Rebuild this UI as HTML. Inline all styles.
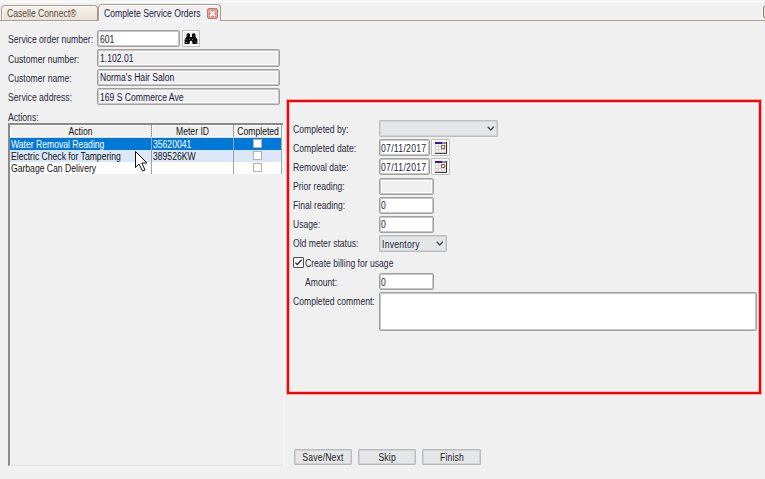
<!DOCTYPE html>
<html><head><meta charset="utf-8">
<style>
*{box-sizing:border-box;margin:0;padding:0}
html,body{width:765px;height:479px;overflow:hidden;background:#f0f0f0;font-family:"Liberation Sans",sans-serif;font-size:10px;color:#222;position:relative}
.a{position:absolute;white-space:nowrap}
.lbl{position:absolute;white-space:nowrap;line-height:13px;color:#2a2a3a;transform:scaleX(.86);transform-origin:0 10px}
.ctr{transform-origin:50% 10px}
.inp{position:absolute;background:#fff;border:1px solid #a0a0a0;border-radius:2px;box-shadow:inset 0 0 0 1px #c6c6c6}
.ro{background:#f0f0f0;box-shadow:inset 0 0 0 1px #c6c6c6,inset 0 0 0 2px #fbfbfb}
.txt{position:absolute;white-space:nowrap;line-height:13px;color:#1a1a3a;transform:scaleX(.86);transform-origin:0 10px}
.bs{display:inline-block;transform:scaleX(.86);letter-spacing:.2px}
.btn{position:absolute;background:#e5e6e7;border:1px solid #bababa;border-radius:1px;box-shadow:inset 0 0 0 1px #d2d2d2;text-align:center;line-height:16px;color:#222}
</style></head><body>
<!-- top tab bar -->
<div class="a" style="left:0;top:0;width:765px;height:1px;background:#f2f6f2"></div>
<div class="a" style="left:0;top:1px;width:765px;height:1px;background:#fdfdfd"></div>
<div class="a" style="left:0;top:2px;width:765px;height:1px;background:#f6f6f6"></div>
<div class="a" style="left:0;top:20px;width:765px;height:1px;background:#a99b90"></div>
<div class="a" style="left:0;top:21px;width:765px;height:1px;background:#f6f6f6"></div>
<div class="a" style="left:0;top:19px;width:765px;height:1px;background:#f4f4f4"></div>
<!-- inactive tab -->
<div class="a" style="left:1px;top:5px;width:97px;height:15px;border:1px solid #a99b90;border-bottom:none;border-radius:4px 4px 0 0;background:linear-gradient(#f6f1e8,#e9e2d6);box-shadow:inset 1px 1px 0 #fff"></div>
<div class="lbl" style="left:7px;top:7px;color:#5a4a40">Caselle Connect®</div>
<!-- active tab -->
<div class="a" style="left:98px;top:4px;width:123px;height:17px;border:1px solid #a99b90;border-bottom:none;border-radius:4px 4px 0 0;background:#f0f0f0;box-shadow:inset 1px 1px 0 #fff"></div>
<div class="lbl" style="left:104px;top:7px;color:#1c1c40">Complete Service Orders</div>
<div class="a" style="left:207px;top:8px;width:11px;height:11px;border:1px solid #a08478;border-radius:2px;background:#f07c7c;box-shadow:inset 0 0 0 1px #f4a0a0"></div>
<svg class="a" style="left:207px;top:8px" width="11" height="11"><path d="M3 3L8 8M8 3L3 8" stroke="#fff" stroke-width="1.8"/></svg>

<div class="a" style="left:763px;top:5px;width:10px;height:14px;border:1px solid #8e8078;border-radius:3px;background:#ece6dc"></div>
<div class="a" style="left:762px;top:6px;width:1px;height:12px;background-image:linear-gradient(#fff 50%,#f0f0f0 50%);background-size:1px 2px"></div>
<!-- left form -->
<div class="lbl" style="left:8px;top:33px">Service order number:</div>
<div class="inp" style="left:97px;top:30px;width:83px;height:17px"></div>
<div class="txt" style="left:100px;top:33px">601</div>
<div class="a" style="left:182px;top:30px;width:18px;height:17px;border:1px solid #bdbdbd;background:#f0f0f0;box-shadow:inset 1px 1px 0 #fff,inset -1px -1px 0 #fff"></div>
<svg class="a" style="left:184px;top:33px" width="14" height="11" viewBox="0 0 14 11"><path d="M2.6 1Q4.3 -0.6 6 1V4H8V1Q9.7 -0.6 11.4 1V3.5L13.4 6.5V11H8.6Q8.4 8 7 7.6Q5.6 8 5.4 11H0.6V6.5L2.6 3.5Z" fill="#0a0a0a"/><rect x="1.5" y="6" width="1" height="1" fill="#9a9a9a"/><rect x="5" y="6" width="1" height="1" fill="#777"/><rect x="8" y="6" width="1" height="1" fill="#777"/><rect x="2" y="9" width="1" height="1" fill="#888"/><rect x="11.5" y="9" width="1" height="1" fill="#888"/></svg>

<div class="lbl" style="left:8px;top:53px">Customer number:</div>
<div class="inp ro" style="left:97px;top:49px;width:183px;height:18px"></div>
<div class="txt" style="left:100px;top:52px">1.102.01</div>

<div class="lbl" style="left:8px;top:72px">Customer name:</div>
<div class="inp ro" style="left:97px;top:69px;width:183px;height:17px"></div>
<div class="txt" style="left:100px;top:71px">Norma's Hair Salon</div>

<div class="lbl" style="left:8px;top:91px">Service address:</div>
<div class="inp ro" style="left:97px;top:88px;width:183px;height:17px"></div>
<div class="txt" style="left:100px;top:91px">169 S Commerce Ave</div>

<div class="lbl" style="left:8px;top:111px">Actions:</div>

<!-- table -->
<div class="a" style="left:8px;top:123px;width:275px;height:343px;border-left:2px solid #8a8a8a;border-top:2px solid #8a8a8a;border-bottom:1px solid #e2e4e6"></div>
<div class="a" style="left:10px;top:125px;width:272px;height:13px;background:#f0f0f0;border-top:1px solid #fff;border-left:1px solid #fff"></div>
<div class="a" style="left:10px;top:136px;width:272px;height:1px;background-image:linear-gradient(90deg,#fff 50%,#f3efe9 50%);background-size:2px 1px"></div>
<div class="a" style="left:10px;top:137px;width:272px;height:1px;background:#e2d9d3"></div>
<div class="a" style="left:10px;top:138px;width:272px;height:12px;background:#0078d7"></div>
<div class="a" style="left:10px;top:150px;width:272px;height:12px;background:#dbe7f7"></div>
<div class="a" style="left:10px;top:162px;width:272px;height:12px;background:#ffffff"></div>
<div class="a" style="left:151px;top:125px;width:1px;height:12px;background-image:linear-gradient(#8a8a8a 50%,#b0b0b0 50%);background-size:1px 2px"></div>
<div class="a" style="left:152px;top:125px;width:1px;height:12px;background:#fafafa"></div>
<div class="a" style="left:151px;top:138px;width:1px;height:36px;background:#a0a0a0"></div>
<div class="a" style="left:233px;top:125px;width:1px;height:12px;background-image:linear-gradient(#8a8a8a 50%,#b0b0b0 50%);background-size:1px 2px"></div>
<div class="a" style="left:234px;top:125px;width:1px;height:12px;background:#fafafa"></div>
<div class="a" style="left:233px;top:138px;width:1px;height:36px;background:#a0a0a0"></div>
<div class="a" style="left:281px;top:125px;width:1px;height:49px;background:#a8a8a8"></div>
<div class="a" style="left:283px;top:125px;width:1px;height:341px;border-left:1px dotted #fff"></div>
<div class="lbl ctr" style="left:10px;top:125px;width:141px;text-align:center;color:#111">Action</div>
<div class="lbl ctr" style="left:152px;top:125px;width:81px;text-align:center;color:#111">Meter ID</div>
<div class="lbl ctr" style="left:234px;top:125px;width:47px;text-align:center;color:#111">Completed</div>
<div class="lbl" style="left:11px;top:138px;color:#fff">Water Removal Reading</div>
<div class="lbl" style="left:153px;top:138px;color:#fff">35620041</div>
<div class="lbl" style="left:11px;top:150px;color:#111">Electric Check for Tampering</div>
<div class="lbl" style="left:153px;top:150px;color:#111">389526KW</div>
<div class="lbl" style="left:11px;top:162px;color:#111">Garbage Can Delivery</div>
<div class="a" style="left:253px;top:139px;width:9px;height:9px;border:1px solid #b0b0b0;background:#fff"></div>
<div class="a" style="left:253px;top:151px;width:9px;height:9px;border:1px solid #b0b0b0;background:#fff"></div>
<div class="a" style="left:253px;top:163px;width:9px;height:9px;border:1px solid #b0b0b0;background:#fff"></div>
<!-- cursor -->
<svg class="a" style="left:128px;top:146px" width="26" height="30" viewBox="0 0 26 30"><path d="M7.5 5.5L7.5 21.5L11 18L14.5 25L17 24L13.8 17L19 17Z" fill="#fff" stroke="#111" stroke-width="1" stroke-linejoin="miter"/></svg>

<!-- red box -->
<div class="a" style="left:287px;top:100px;width:474px;height:294px;border:2px solid #ff0000;box-shadow:0 0 0 1px rgba(255,40,40,.4),0 0 0 2px rgba(236,250,250,.9),inset 0 0 0 1px rgba(255,40,40,.3),inset 0 0 0 2px rgba(236,250,250,.9)"></div>

<!-- right form -->
<div class="lbl" style="left:293px;top:123px">Completed by:</div>
<div class="a" style="left:379px;top:120px;width:119px;height:17px;border:1px solid #bdbdbd;border-radius:1px;background:#e3e5e6;box-shadow:inset 0 0 0 1px #d0d2d3"></div>
<svg class="a" style="left:487px;top:126px" width="8" height="6"><path d="M0.7 0.8L3.8 4L6.9 0.8" fill="none" stroke="#4a4a4a" stroke-width="1.3"/></svg>

<div class="lbl" style="left:293px;top:142px">Completed date:</div>
<div class="inp" style="left:379px;top:139px;width:51px;height:17px"></div>
<div class="txt" style="left:381px;top:142px;letter-spacing:.35px">07/11/2017</div>
<div class="a" style="left:431px;top:139px;width:19px;height:17px;border:1px solid #bcbcbc;border-radius:1px;background:#f0f0f0;box-shadow:inset 0 0 0 1px #fff"></div>
<svg class="a" style="left:435px;top:142px" width="12" height="12" viewBox="0 0 12 12"><rect width="12" height="12" fill="#fff"/><path d="M0.5 2v9M3.5 2v9M6.5 2v9M9.5 2v9M0 4.5h11M0 7.5h11M0 10.5h11" stroke="#cfcfcf" stroke-width="1"/><rect x="0" y="0" width="7" height="2" fill="#3a149e"/><rect x="7" y="0" width="4" height="2" fill="#8c8c8c"/><rect x="11" y="0" width="1" height="12" fill="#333"/><rect x="0" y="11" width="12" height="1" fill="#444"/><rect x="6.5" y="3.5" width="3" height="3" fill="#f4e8e0" stroke="#b85432" stroke-width="1"/></svg>

<div class="lbl" style="left:293px;top:161px">Removal date:</div>
<div class="inp" style="left:379px;top:158px;width:51px;height:17px"></div>
<div class="txt" style="left:381px;top:161px;letter-spacing:.35px">07/11/2017</div>
<div class="a" style="left:431px;top:158px;width:19px;height:17px;border:1px solid #bcbcbc;border-radius:1px;background:#f0f0f0;box-shadow:inset 0 0 0 1px #fff"></div>
<svg class="a" style="left:435px;top:161px" width="12" height="12" viewBox="0 0 12 12"><rect width="12" height="12" fill="#fff"/><path d="M0.5 2v9M3.5 2v9M6.5 2v9M9.5 2v9M0 4.5h11M0 7.5h11M0 10.5h11" stroke="#cfcfcf" stroke-width="1"/><rect x="0" y="0" width="7" height="2" fill="#3a149e"/><rect x="7" y="0" width="4" height="2" fill="#8c8c8c"/><rect x="11" y="0" width="1" height="12" fill="#333"/><rect x="0" y="11" width="12" height="1" fill="#444"/><rect x="6.5" y="3.5" width="3" height="3" fill="#f4e8e0" stroke="#b85432" stroke-width="1"/></svg>

<div class="lbl" style="left:293px;top:180px">Prior reading:</div>
<div class="inp ro" style="left:379px;top:178px;width:55px;height:17px"></div>

<div class="lbl" style="left:293px;top:199px">Final reading:</div>
<div class="inp" style="left:379px;top:197px;width:55px;height:17px"></div>
<div class="txt" style="left:381px;top:199px">0</div>

<div class="lbl" style="left:293px;top:218px">Usage:</div>
<div class="inp" style="left:379px;top:216px;width:55px;height:17px"></div>
<div class="txt" style="left:381px;top:218px">0</div>

<div class="lbl" style="left:293px;top:237px">Old meter status:</div>
<div class="a" style="left:379px;top:235px;width:68px;height:17px;border:1px solid #bdbdbd;border-radius:1px;background:#e3e5e6;box-shadow:inset 0 0 0 1px #d0d2d3"></div>
<div class="txt" style="left:382px;top:238px;letter-spacing:.3px">Inventory</div>
<svg class="a" style="left:436px;top:241px" width="8" height="6"><path d="M0.7 0.8L3.8 4L6.9 0.8" fill="none" stroke="#4a4a4a" stroke-width="1.3"/></svg>

<div class="a" style="left:293px;top:257px;width:11px;height:11px;border:1px solid #4a4a4a;border-radius:1px;background:#fff"></div>
<svg class="a" style="left:293px;top:257px" width="11" height="11"><path d="M2.3 5.6L4.3 7.5L8.7 2.8" fill="none" stroke="#2a2a2a" stroke-width="1.3"/></svg>
<div class="lbl" style="left:305px;top:257px">Create billing for usage</div>

<div class="lbl" style="left:305px;top:276px">Amount:</div>
<div class="inp" style="left:379px;top:273px;width:55px;height:17px"></div>
<div class="txt" style="left:381px;top:276px">0</div>

<div class="lbl" style="left:293px;top:295px">Completed comment:</div>
<div class="inp" style="left:379px;top:292px;width:378px;height:39px"></div>

<!-- buttons -->
<div class="btn" style="left:294px;top:449px;width:58px;height:16px"><span class="bs">Save/Next</span></div>
<div class="btn" style="left:358px;top:449px;width:58px;height:16px"><span class="bs">Skip</span></div>
<div class="btn" style="left:422px;top:449px;width:59px;height:16px"><span class="bs">Finish</span></div>
</body></html>
